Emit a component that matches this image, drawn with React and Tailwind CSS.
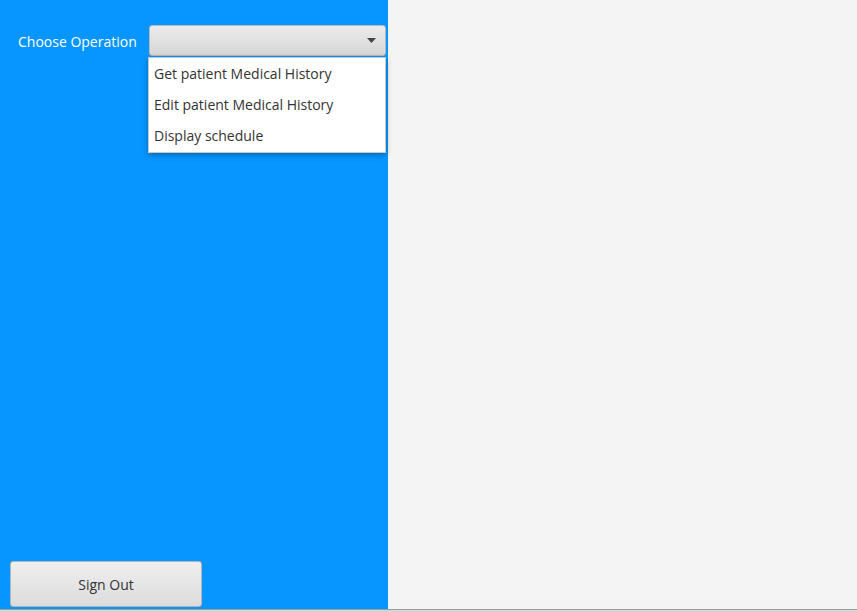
import React, { useState } from 'react';

const operations = ['Get patient Medical History', 'Edit patient Medical History', 'Display schedule'];

export default function App() {
  const [open, setOpen] = useState(true);
  const [selected, setSelected] = useState('');

  return (
    <div className="flex h-[612px] w-[857px] flex-col overflow-hidden bg-[#f4f4f4] font-['Open_Sans',sans-serif] text-[14px]">
      <div className="flex h-[609px]">
        <div className="relative flex w-[388px] flex-col justify-between bg-[#0796ff] pb-[2px] pl-[10px] pt-[25px]">
          <div className="flex items-center">
            <span className="w-[139px] pl-[8px] pt-[2px] text-white">Choose Operation</span>
            <div className="relative">
              <button
                type="button"
                onClick={() => setOpen(!open)}
                className="flex h-[31px] w-[237px] items-center justify-between rounded-[3px] border border-[#b9b9b9] bg-gradient-to-b from-[#ececec] to-[#d6d6d6] px-[8px] text-[#333]"
              >
                <span>{selected}</span>
                <svg width="9" height="5" viewBox="0 0 9 5" className="mr-[1px]">
                  <path d="M0 0h9L4.5 5z" fill="#444" />
                </svg>
              </button>
              {open && (
                <ul className="absolute left-[-1px] top-[32px] z-10 w-[238px] border border-[#c8c8c8] bg-white pb-[1px] shadow-[0_2px_6px_rgba(0,0,0,0.3)]">
                  {operations.map((op) => (
                    <li
                      key={op}
                      onClick={() => { setSelected(op); setOpen(false); }}
                      className="h-[31px] cursor-default px-[5px] leading-[31px] text-[#333]"
                    >
                      {op}
                    </li>
                  ))}
                </ul>
              )}
            </div>
          </div>
          <button
            type="button"
            className="h-[46px] w-[192px] rounded-[3px] border border-[#b5b5b5] bg-gradient-to-b from-[#efefef] to-[#dcdcdc] text-[#333]"
          >
            Sign Out
          </button>
        </div>
        <div className="flex-1 bg-[#f4f4f4]" />
      </div>
      <div className="h-[1px] bg-[#9d9d9d]" />
      <div className="h-[2px] bg-[#d4d4d4]" />
    </div>
  );
}
